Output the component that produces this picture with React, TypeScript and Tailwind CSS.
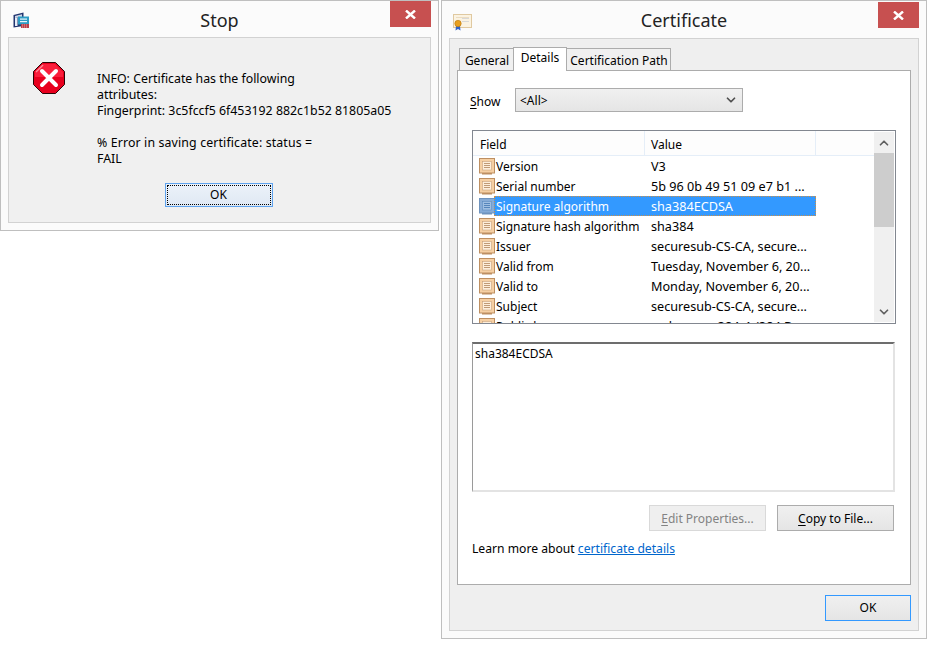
import { ChevronDown, ChevronUp } from 'lucide-react';

const rows = [
  ['Version', 'V3'],
  ['Serial number', '5b 96 0b 49 51 09 e7 b1 ...'],
  ['Signature algorithm', 'sha384ECDSA'],
  ['Signature hash algorithm', 'sha384'],
  ['Issuer', 'securesub-CS-CA, secure...'],
  ['Valid from', 'Tuesday, November 6, 20...'],
  ['Valid to', 'Monday, November 6, 20...'],
  ['Subject', 'securesub-CS-CA, secure...'],
  ['Public key', 'ecdsa_secp384r1 (384 B...'],
];

function CloseButton() {
  return (
    <div className="w-[41px] h-[26px] bg-[#c75050] flex items-center justify-center">
      <svg width="11" height="9" viewBox="0 0 11 9">
        <path d="M1 0.5 L10 8.5 M10 0.5 L1 8.5" stroke="#fff" strokeWidth="2.4" />
      </svg>
    </div>
  );
}

function AppIcon() {
  return (
    <svg width="16" height="16" viewBox="0 0 16 16">
      <path d="M0.5 3 L10.5 0.5 L10.5 14 L0.5 15.5 Z" fill="#22356f" />
      <path d="M2 4 L9 2.2 L9 5 L2 6 Z" fill="#cfd6e6" />
      <rect x="2" y="6" width="2.5" height="8" fill="#e6ecf6" />
      <rect x="5" y="4.5" width="11" height="8" fill="#2d9cc4" />
      <rect x="7" y="6.5" width="7" height="1.2" fill="#e8f6fb" />
      <rect x="7" y="9" width="7" height="1.2" fill="#e8f6fb" />
      <rect x="8" y="12" width="8" height="4" fill="#b84048" />
      <path d="M9 13 H15 M9 15 H15" stroke="#e6a0a4" strokeDasharray="1 1" />
    </svg>
  );
}

function ErrorIcon() {
  return (
    <svg width="32" height="32" viewBox="0 0 32 32">
      <path d="M9.5 0.5 H22.5 L31.5 9.5 V22.5 L22.5 31.5 H9.5 L0.5 22.5 V9.5 Z" fill="#e8001e" stroke="#2a0508" />
      <path d="M10 2 H22 L30 10 V15 H2 V10 Z" fill="#fa1e3c" />
      <path d="M3 10 L10 3" stroke="#ff8a98" strokeWidth="1.5" />
      <path d="M9 9 L23 23 M23 9 L9 23" stroke="#fff" strokeWidth="4" strokeLinecap="round" />
    </svg>
  );
}

function CertIcon() {
  return (
    <svg width="19" height="17" viewBox="0 0 19 17">
      <rect x="0.5" y="0.5" width="18" height="13" fill="#fbf3e2" stroke="#e0c9a0" />
      <rect x="9" y="4" width="7" height="1" fill="#d8d8d8" />
      <rect x="9" y="7" width="7" height="1" fill="#d8d8d8" />
      <rect x="3" y="3" width="13" height="1" fill="#ecdcc0" />
      <path d="M3 12 L2.5 16.5 L5 15 L7.5 16.5 L7 12 Z" fill="#2f62c8" />
      <circle cx="5" cy="9.5" r="3.2" fill="#e8a020" stroke="#b87810" strokeWidth="0.6" />
    </svg>
  );
}

function RowIcon({ selected }: { selected: boolean }) {
  const frame = selected ? '#6f93bd' : '#bd8f62';
  const fill = selected ? '#86abd6' : '#f6cfa2';
  const inner = selected ? '#9fbfe2' : '#fdeedb';
  const line = selected ? '#5585bb' : '#c09a76';
  return (
    <svg width="16" height="17" viewBox="0 0 16 17" className="shrink-0">
      <rect x="0.5" y="0.5" width="15" height="14.5" fill={fill} stroke={frame} />
      <rect x="3.5" y="3.5" width="9" height="8.5" fill={inner} stroke={line} strokeWidth="0.5" />
      <path d="M5 5.5 H11 M5 7.5 H11 M5 9.5 H11" stroke={line} />
      <rect x="3" y="15" width="10" height="1.5" fill={frame} />
    </svg>
  );
}

function Key({ k, rest, disabled }: { k: string; rest: string; disabled?: boolean }) {
  return (
    <span className={disabled ? 'text-[#838383]' : ''}>
      <span className="underline underline-offset-2">{k}</span>
      {rest}
    </span>
  );
}

function CertList() {
  return (
    <div className="mt-[18px] h-[194px] border border-[#828790] bg-white flex overflow-hidden">
      <div className="flex-1 min-w-0">
        <div className="h-[25px] flex border-b border-[#e5eef8] bg-[#fdfdfd]">
          <div className="w-[172px] pl-[7px] pt-[6px] border-r border-[#e5eef8]">Field</div>
          <div className="w-[171px] pl-[6px] pt-[6px] border-r border-[#e5eef8]">Value</div>
        </div>
        {rows.map(([field, value], i) => {
          const selected = i === 2;
          return (
            <div key={field} className="h-[20px] flex items-center">
              <div className="w-[21px] pl-[6px] shrink-0"><RowIcon selected={selected} /></div>
              <div className={`flex h-[20px] w-[322px] items-center border border-dotted pt-[2px] ${selected ? 'bg-[#3399ff] text-white border-[#c98f4a]' : 'border-transparent'}`}>
                <div className="w-[156px] pl-[1px] whitespace-nowrap overflow-hidden">{field}</div>
                <div className="whitespace-nowrap text-[12.65px] -mt-[2px]">{value}</div>
              </div>
            </div>
          );
        })}
      </div>
      <div className="w-[20px] my-[1px] mr-[1px] bg-[#f0f0f0] flex flex-col shrink-0">
        <div className="h-[21px] flex items-center justify-center"><ChevronUp size={14} strokeWidth={3} color="#606060" /></div>
        <div className="h-[74px] bg-[#cdcdcd]" />
        <div className="flex-1" />
        <div className="h-[21px] flex items-center justify-center"><ChevronDown size={14} strokeWidth={3} color="#606060" /></div>
      </div>
    </div>
  );
}

export default function App() {
  return (
    <div className="relative w-[928px] h-[648px] bg-white text-[12px] leading-[16px] text-black font-['Noto_Sans',sans-serif]">
      {/* Stop dialog */}
      <div className="absolute left-0 top-0 w-[439px] h-[231px] border border-[#bfbfbf] bg-[#fbfbfb] flex flex-col">
        <div className="h-[36px] flex justify-between pr-[7px]">
          <div className="pl-[12px] pt-[11px] w-[48px]"><AppIcon /></div>
          <div className="text-[18px] leading-[24px] pt-[7px] text-[#222]">Stop</div>
          <CloseButton />
        </div>
        <div className="mx-[7px] h-[186px] border border-[#d2d2d2] bg-[#f0f0f0] flex flex-col">
          <div className="flex h-[145px]">
            <div className="pl-[24px] pt-[24px] w-[88px]"><ErrorIcon /></div>
            <div className="pt-[33px] text-[12.35px]">
              <p>INFO: Certificate has the following</p>
              <p>attributes:</p>
              <p>Fingerprint: 3c5fccf5 6f453192 882c1b52 81805a05</p>
              <p className="mt-[16px] tracking-[0.13px]">% Error in saving certificate: status =</p>
              <p>FAIL</p>
            </div>
          </div>
          <div className="flex justify-center pr-[2px]">
            <div className="w-[108px] h-[24px] border border-[#5fa3ee] bg-gradient-to-b from-[#ecf2f9] to-[#dfe8f3] p-[1px]">
              <div className="h-full border border-dotted border-black flex items-center justify-center">OK</div>
            </div>
          </div>
        </div>
      </div>

      {/* Certificate dialog */}
      <div className="absolute left-[441px] top-0 w-[486px] h-[639px] border border-[#bfbfbf] bg-[#fbfbfb] flex flex-col">
        <div className="h-[37px] flex justify-between pr-[7px] pt-[1px]">
          <div className="pl-[11px] pt-[12px] w-[48px]"><CertIcon /></div>
          <div className="text-[18px] leading-[24px] pt-[6px] text-[#222]">Certificate</div>
          <CloseButton />
        </div>
        <div className="mx-[7px] h-[593px] border border-[#d2d2d2] bg-[#efefef] px-[7px] flex flex-col">
          <div className="h-[31px] flex items-end pl-[2px] relative z-10">
            <div className="h-[22px] w-[55px] border border-[#acacac] border-b-0 bg-[#f0f0f0] flex items-center justify-center pl-[1px] pt-[2px]">General</div>
            <div className="h-[24px] -mb-[1px] w-[54px] border border-[#acacac] border-b-0 bg-white flex items-start pt-[2px] justify-center -mx-[1px]">Details</div>
            <div className="h-[22px] w-[105px] border border-[#acacac] border-b-0 bg-[#f0f0f0] flex items-center justify-center pl-[1px] pt-[2px]">Certification Path</div>
          </div>
          <div className="h-[515px] border border-[#acacac] bg-white px-[14px] pt-[17px] flex flex-col">
            <div className="flex items-center h-[24px]">
              <div className="w-[45px] -ml-[2px] pt-[4px]"><Key k="S" rest="how" /></div>
              <div className="w-[228px] h-[24px] border border-[#acacac] bg-gradient-to-b from-[#f0f0f0] to-[#e5e5e5] pl-[4px] pr-[4px] flex items-center justify-between">
                <span className="pt-[2px]">&lt;All&gt;</span>
                <ChevronDown size={14} strokeWidth={3} color="#505050" />
              </div>
            </div>
            <CertList />
            <div className="mt-[18px] h-[150px] w-[423px] border-2 border-[#e3e3e3] border-t-[#6d6d6d] border-l-[#9a9a9a] border-l-[1px] pl-[2px] pt-[2px]">
              sha384ECDSA
            </div>
            <div className="mt-[13px] flex justify-end gap-[11px] mr-[2px]">
              <div className="w-[117px] h-[26px] border border-[#d9d9d9] bg-[#efefef] flex items-center justify-center pt-[2px]">
                <Key k="E" rest="dit Properties..." disabled />
              </div>
              <div className="w-[117px] h-[26px] border border-[#acacac] bg-gradient-to-b from-[#f0f0f0] to-[#e5e5e5] flex items-center justify-center pt-[2px]">
                <Key k="C" rest="opy to File..." />
              </div>
            </div>
            <div className="mt-[10px] text-[12.15px]">
              Learn more about <span className="text-[#0066cc] underline">certificate details</span>
            </div>
          </div>
          <div className="flex justify-end mt-[10px]">
            <div className="w-[86px] h-[26px] border border-[#3399ff] bg-gradient-to-b from-[#f0f0f0] to-[#e5e5e5] flex items-center justify-center">OK</div>
          </div>
        </div>
      </div>
    </div>
  );
}
